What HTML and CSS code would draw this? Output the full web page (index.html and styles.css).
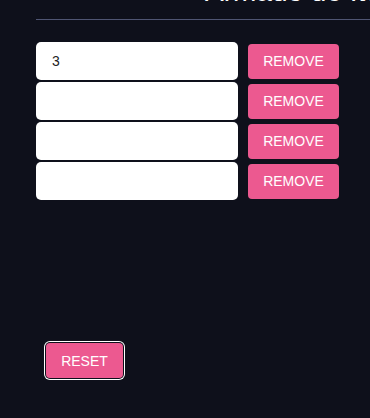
FILE: index.html
```html
<!DOCTYPE html>
<html>
<head>
<meta charset="utf-8">
<link rel="stylesheet" href="styles.css">
</head>
<body>
<div class="page">
  <header class="header">
    <h1 class="title">Armado de Items</h1>
  </header>
  <div class="list">
    <div class="row"><input class="field" type="text" value="3"><button class="btn">REMOVE</button></div>
    <div class="row"><input class="field" type="text" value=""><button class="btn">REMOVE</button></div>
    <div class="row"><input class="field" type="text" value=""><button class="btn">REMOVE</button></div>
    <div class="row"><input class="field" type="text" value=""><button class="btn">REMOVE</button></div>
  </div>
  <div class="footer">
    <button class="btn reset">RESET</button>
  </div>
</div>
</body>
</html>
```
FILE: styles.css
```css
html, body {
  margin: 0;
  padding: 0;
  background: #0e101b;
  height: 100%;
}
body {
  font-family: "Liberation Sans", Arial, sans-serif;
  overflow: hidden;
}
.page {
  padding-left: 36px;
}
.header {
  height: 19px;
  overflow: hidden;
  border-bottom: 1px solid #4f5573;
}
.title {
  margin: -24px 0 0 169px;
  font-size: 28px;
  font-weight: 400;
  color: #ffffff;
  line-height: 32px;
  white-space: nowrap;
}
.list {
  margin-top: 22px;
  display: flex;
  flex-direction: column;
  gap: 2px;
}
.row {
  display: flex;
  align-items: center;
  gap: 10px;
}
.field {
  box-sizing: border-box;
  width: 202px;
  height: 38px;
  margin: 0;
  border: 0;
  border-radius: 5px;
  background: #ffffff;
  padding: 0 16px;
  font-family: "Liberation Sans", Arial, sans-serif;
  font-size: 14px;
  color: #222;
  outline: none;
}
.btn {
  box-sizing: border-box;
  width: 91px;
  height: 35px;
  margin: 0;
  border: 0;
  border-radius: 4px;
  background: #ec5990;
  color: #ffffff;
  font-family: "Liberation Sans", Arial, sans-serif;
  font-size: 14px;
  padding: 0;
}
.footer {
  margin-top: 143px;
  padding-left: 10px;
}
.reset {
  width: 77px;
  height: 35px;
  box-shadow: 0 0 0 1px #0e101b, 0 0 0 2px #ffffff;
  border-radius: 4px;
}
```
